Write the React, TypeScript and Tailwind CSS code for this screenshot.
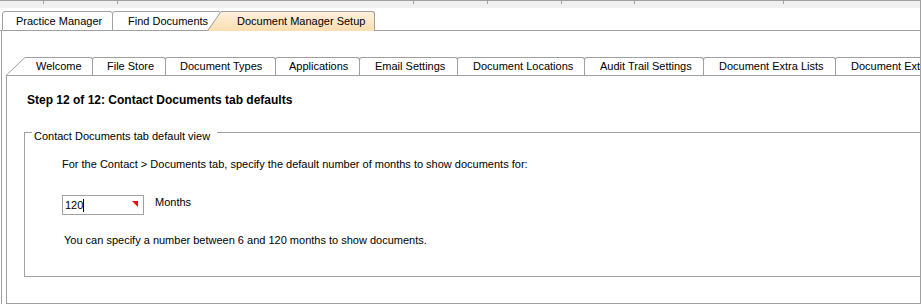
import React from "react";

const line = "border-[#a0a0a0]";

function OuterTab({ label, w, pl, first }: { label: string; w: string; pl: string; first?: boolean }) {
  return (
    <div
      className={`${w} ${pl} ${first ? "" : "-ml-px"} h-full flex items-center border-l border-t border-r border-b ${line} rounded-t-[3px] bg-white whitespace-nowrap`}
    >
      {label}
    </div>
  );
}

function InnerTab({ label, w, pl }: { label: string; w: string; pl: string }) {
  return (
    <div
      className={`${w} ${pl} -ml-px h-[18px] shrink-0 flex items-center border-l border-t border-r ${line} rounded-t-[3px] bg-white whitespace-nowrap`}
    >
      {label}
    </div>
  );
}

export default function App() {
  return (
    <div className="w-[921px] h-[304px] flex flex-col overflow-hidden bg-white border-r border-[#a0a0a0] text-black text-[11px] leading-[13px] font-['Liberation_Sans',Arial,sans-serif]">
      {/* top strip */}
      <div className="h-[8px] shrink-0 border-t border-[#a0a0a0] bg-[#f0f0f0] flex items-start">
        <div className={`w-[44px] h-[3px] border-r ${line}`} />
        <div className={`w-[74px] h-[3px] border-r ${line}`} />
        <div className={`w-[296px] h-[3px] border-r ${line}`} />
        <div className={`w-[74px] h-[3px] border-r ${line}`} />
        <div className={`w-[74px] h-[3px] border-r ${line}`} />
        <div className={`w-[73px] h-[3px] border-r ${line}`} />
        <div className={`w-[149px] h-[3px] border-r ${line}`} />
      </div>
      <div className="h-[3px] shrink-0" />

      {/* outer tabs row */}
      <div className="h-[20px] shrink-0 flex items-stretch">
        <div className={`w-[2px] border-b ${line}`} />
        <OuterTab label="Practice Manager" w="w-[111px]" pl="pl-[13px]" first />
        <OuterTab label="Find Documents" w="w-[110px]" pl="pl-[15px]" />
        <div className="relative z-10 -ml-[15px] flex items-stretch">
          <svg width="14" height="20" viewBox="0 0 14 20" className="block">
            <defs>
              <linearGradient id="peach" x1="0" y1="0" x2="0" y2="1">
                <stop offset="0" stopColor="#fef0dc" />
                <stop offset="1" stopColor="#fcdeb0" />
              </linearGradient>
            </defs>
            <polygon points="0,20 14,0 14,20" fill="url(#peach)" />
            <line x1="0.5" y1="20" x2="14" y2="0.5" stroke="#a0a0a0" strokeWidth="1" />
          </svg>
          <div className={`w-[154px] pl-[16px] flex items-center border-t border-r ${line} rounded-tr-[3px] bg-gradient-to-b from-[#fef0dc] to-[#fcdeb0] whitespace-nowrap`}>
            Document Manager Setup
          </div>
        </div>
        <div className={`flex-1 border-b ${line}`} />
      </div>

      {/* outer panel */}
      <div className={`flex-1 ml-[1px] border-l ${line} pl-[4px] pt-[26px] flex flex-col min-h-0`}>
        {/* inner tabs row */}
        <div className={`h-[19px] shrink-0 flex items-end border-b ${line} overflow-hidden`}>
          <svg width="19" height="18" viewBox="0 0 19 18" className="block shrink-0">
            <polygon points="0,18 19,0 19,18" fill="#ffffff" />
            <line x1="0.5" y1="18" x2="19" y2="0.5" stroke="#a0a0a0" strokeWidth="1" />
          </svg>
          <div className={`w-[68px] pl-[11px] h-[18px] shrink-0 flex items-center border-t border-r ${line} rounded-tr-[3px] bg-white whitespace-nowrap`}>
            Welcome
          </div>
          <InnerTab label="File Store" w="w-[74px]" pl="pl-[14px]" />
          <InnerTab label="Document Types" w="w-[111px]" pl="pl-[14px]" />
          <InnerTab label="Applications" w="w-[85px]" pl="pl-[13px]" />
          <InnerTab label="Email Settings" w="w-[99px]" pl="pl-[15px]" />
          <InnerTab label="Document Locations" w="w-[128px]" pl="pl-[15px]" />
          <InnerTab label="Audit Trail Settings" w="w-[120px]" pl="pl-[15px]" />
          <InnerTab label="Document Extra Lists" w="w-[133px]" pl="pl-[15px]" />
          <InnerTab label="Document Extra Fields" w="w-[200px]" pl="pl-[15px]" />
        </div>

        {/* inner panel */}
        <div className={`flex-1 border-l border-b ${line} overflow-hidden pl-[20px] pt-[17px]`}>
          <div className="text-[12px] leading-[14px] font-bold whitespace-nowrap">
            Step 12 of 12: Contact Documents tab defaults
          </div>
          <fieldset className={`-ml-[3px] mt-[19px] w-[1000px] h-[151px] border ${line}`}>
            <legend className="ml-[7px] pl-[2px] pr-[7px] h-[13px] leading-[21px] whitespace-nowrap">
              Contact Documents tab default view
            </legend>
            <div className="pl-[37px] pt-[19px]">
              <div className="whitespace-nowrap">
                For the Contact &gt; Documents tab, specify the default number of months to show documents for:
              </div>
              <div className="mt-[24px] flex items-start">
                <div className={`relative w-[82px] h-[20px] border ${line} bg-white flex items-center pl-[2px]`}>
                  <span>120</span>
                  <span className="w-px h-[13px] bg-black" />
                  <svg width="6" height="6" viewBox="0 0 6 6" className="absolute right-[5px] top-[5px]">
                    <polygon points="0,0 6,0 6,6" fill="#ff0000" />
                  </svg>
                </div>
                <div className="ml-[11px] mt-[1px]">Months</div>
              </div>
              <div className="mt-[19px] ml-[2px] whitespace-nowrap">
                You can specify a number between 6 and 120 months to show documents.
              </div>
            </div>
          </fieldset>
        </div>
      </div>
    </div>
  );
}
